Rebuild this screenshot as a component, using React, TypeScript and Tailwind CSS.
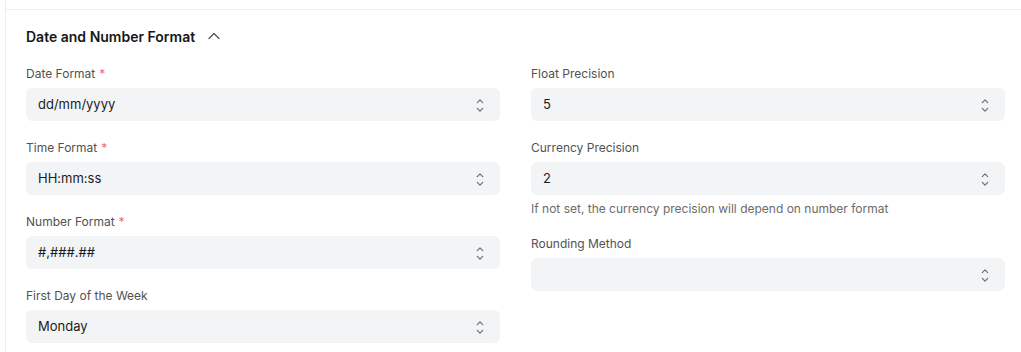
import React from 'react';

type Field = {
  label: string;
  value: string;
  required?: boolean;
  description?: string;
};

const leftFields: Field[] = [
  { label: 'Date Format', value: 'dd/mm/yyyy', required: true },
  { label: 'Time Format', value: 'HH:mm:ss', required: true },
  { label: 'Number Format', value: '#,###.##', required: true },
  { label: 'First Day of the Week', value: 'Monday' },
];

const rightFields: Field[] = [
  { label: 'Float Precision', value: '5' },
  {
    label: 'Currency Precision',
    value: '2',
    description: 'If not set, the currency precision will depend on number format',
  },
  { label: 'Rounding Method', value: '' },
];

function SelectIcon() {
  return (
    <svg className="mt-[1px]" width="8" height="15" viewBox="0 0 8 15" fill="none" stroke="#6b7280" strokeWidth="1.3" strokeLinecap="round" strokeLinejoin="round">
      <path d="M1.3 4.6 4 1.9 6.7 4.6" />
      <path d="M1.3 10.4 4 13.1 6.7 10.4" />
    </svg>
  );
}

function SelectField({ field }: { field: Field }) {
  return (
    <div className="flex flex-col">
      <label className="h-4 mb-[6px] text-[12px] leading-4 text-[#525252]">
        {field.label}
        {field.required && <span className="ml-1 text-[#f26d6d]">*</span>}
      </label>
      <div className="h-[33px] rounded-md bg-[#f3f4f6] flex items-center justify-between pl-3 pr-[16px]">
        <span className="text-[13px] text-[#1c1c1c]">{field.value}</span>
        <SelectIcon />
      </div>
      {field.description && (
        <p className="mt-[6px] text-[12px] leading-4 text-[#6b6b6b]">{field.description}</p>
      )}
    </div>
  );
}

export default function App() {
  return (
    <div className="h-[352px] w-full overflow-hidden bg-white pl-[5px]" style={{ fontFamily: 'Inter, "Noto Sans", sans-serif' }}>
      <div className="h-full border-l border-[#ededed] pt-[9px]">
        <section className="border-t border-[#ededed] pl-5 pr-4 pt-4">
          <div className="flex items-center h-5">
            <h2 className="text-[14px] font-semibold text-[#171717]">Date and Number Format</h2>
            <svg className="ml-[13px]" width="12" height="8" viewBox="0 0 12 8" fill="none" stroke="#525252" strokeWidth="1.3" strokeLinecap="round" strokeLinejoin="round">
              <path d="M1 6.5 6 1.5 11 6.5" />
            </svg>
          </div>
          <div className="mt-[20px] grid grid-cols-2 gap-x-[31px]">
            <div className="flex flex-col gap-[19px]">
              {leftFields.map((f) => (
                <SelectField key={f.label} field={f} />
              ))}
            </div>
            <div className="flex flex-col gap-[19px]">
              {rightFields.map((f) => (
                <SelectField key={f.label} field={f} />
              ))}
            </div>
          </div>
        </section>
      </div>
    </div>
  );
}
